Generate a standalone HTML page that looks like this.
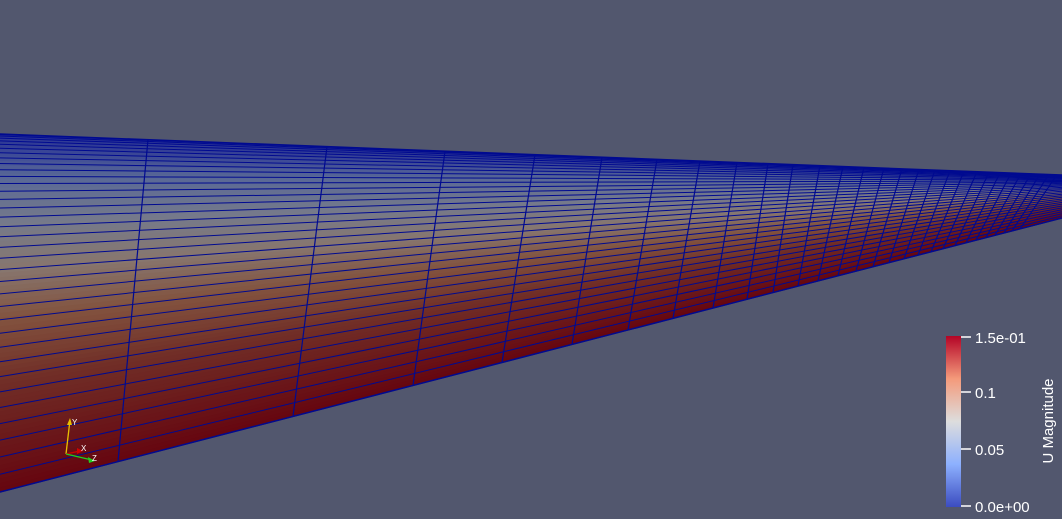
<!DOCTYPE html>
<html><head><meta charset="utf-8"><style>
html,body{margin:0;padding:0;background:#52576e;width:1062px;height:519px;overflow:hidden}
svg{position:absolute;left:0;top:0}
.lbl{font-family:"Liberation Sans",sans-serif;font-size:15px;fill:#fff}
</style></head><body>
<svg id="s" width="1062" height="519" viewBox="0 0 1062 519" xmlns="http://www.w3.org/2000/svg">
<defs>
<linearGradient id="cb" x1="0" y1="1" x2="0" y2="0">
<stop offset="0" stop-color="#3b4cc0"/><stop offset="0.25" stop-color="#8db0fe"/>
<stop offset="0.5" stop-color="#dddddd"/><stop offset="0.75" stop-color="#f49a7b"/>
<stop offset="1" stop-color="#b40426"/></linearGradient>
</defs>
<g id="mesh"></g>
<rect x="946" y="336" width="15" height="171" fill="url(#cb)"/>
<g stroke="#fff" stroke-width="1.5">
<line x1="961" y1="337" x2="971" y2="337"/><line x1="961" y1="392" x2="971" y2="392"/>
<line x1="961" y1="449" x2="971" y2="449"/><line x1="961" y1="506" x2="971" y2="506"/></g>
<text class="lbl" x="975" y="343">1.5e-01</text>
<text class="lbl" x="975" y="398">0.1</text>
<text class="lbl" x="975" y="455">0.05</text>
<text class="lbl" x="975" y="512">0.0e+00</text>
<text class="lbl" transform="translate(1053,421) rotate(-90)" text-anchor="middle">U Magnitude</text>
<g stroke-width="1.3">
<line x1="66" y1="454" x2="70" y2="420" stroke="#e8c000"/>
<polygon points="70,418 67,425 72,425" fill="#e8c000"/>
<line x1="66" y1="454" x2="80" y2="451" stroke="#d00000"/>
<polygon points="83,451 77,448 77,454" fill="#d00000"/>
<line x1="66" y1="454" x2="92" y2="460" stroke="#20d020"/>
<polygon points="95,461 88,457 89,463" fill="#20d020"/>
</g>
<text x="72" y="425" font-family="Liberation Sans" font-size="8" fill="#fff">Y</text>
<text x="81" y="451" font-family="Liberation Sans" font-size="8" fill="#fff">X</text>
<text x="92" y="461" font-family="Liberation Sans" font-size="8" fill="#fff">Z</text>
</svg>
<script>
(function(){
var NS="http://www.w3.org/2000/svg",g=document.getElementById("mesh");
function el(n,a){var e=document.createElementNS(NS,n);for(var k in a)e.setAttribute(k,a[k]);g.appendChild(e);return e;}
var W=1062;
function topY(x){return 134+41*x/W;}
function botY(x){return 492-274*x/W;}
function yAt(x,t){return topY(x)+(botY(x)-topY(x))*t;}
var cs=[[0,[40,50,150]],[0.12,[90,105,150]],[0.25,[118,122,138]],[0.38,[135,118,110]],[0.52,[130,82,62]],[0.7,[112,45,38]],[1,[102,6,16]]];
function col(t){for(var i=1;i<cs.length;i++){if(t<=cs[i][0]){var a=cs[i-1],b=cs[i],f=(t-a[0])/(b[0]-a[0]);return "rgb("+[0,1,2].map(function(j){return Math.round(a[1][j]+(b[1][j]-a[1][j])*f)}).join(",")+")";}}return "rgb(102,6,16)";}
var B=80;
for(var i=0;i<B;i++){var t0=i/B,t1=(i+1)/B;
el("polygon",{points:"0,"+yAt(0,t0)+" "+W+","+yAt(W,t0)+" "+W+","+(yAt(W,t1)+0.6)+" 0,"+(yAt(0,t1)+0.6),fill:col((t0+t1)/2)});}
var N=36,p=1.8;
for(var k=0;k<=N;k++){var t=Math.pow(k/N,p);
el("line",{x1:0,y1:yAt(0,t),x2:W,y2:yAt(W,t),stroke:"#000a90","stroke-width":k==0||k==N?1.5:1});}
var tops=[148,327,445,535,602,657,700,737,768,793,820,843,864,884,902,919,935,950,964,977,989,1000,1011,1021,1031,1040,1049,1057];
var bots=[118,293,413,502,572,628,673,713,747,773,798,818,838,856,873,889,904,918,931,943,955,966,976,986,995,1004,1012,1020];
for(var i=0;i<tops.length;i++){var xt=tops[i],xbb=bots[i];
el("line",{x1:xt,y1:topY(xt),x2:xbb,y2:botY(xbb),stroke:"#000a90","stroke-width":1.2});}
})();
</script>
</body></html>
